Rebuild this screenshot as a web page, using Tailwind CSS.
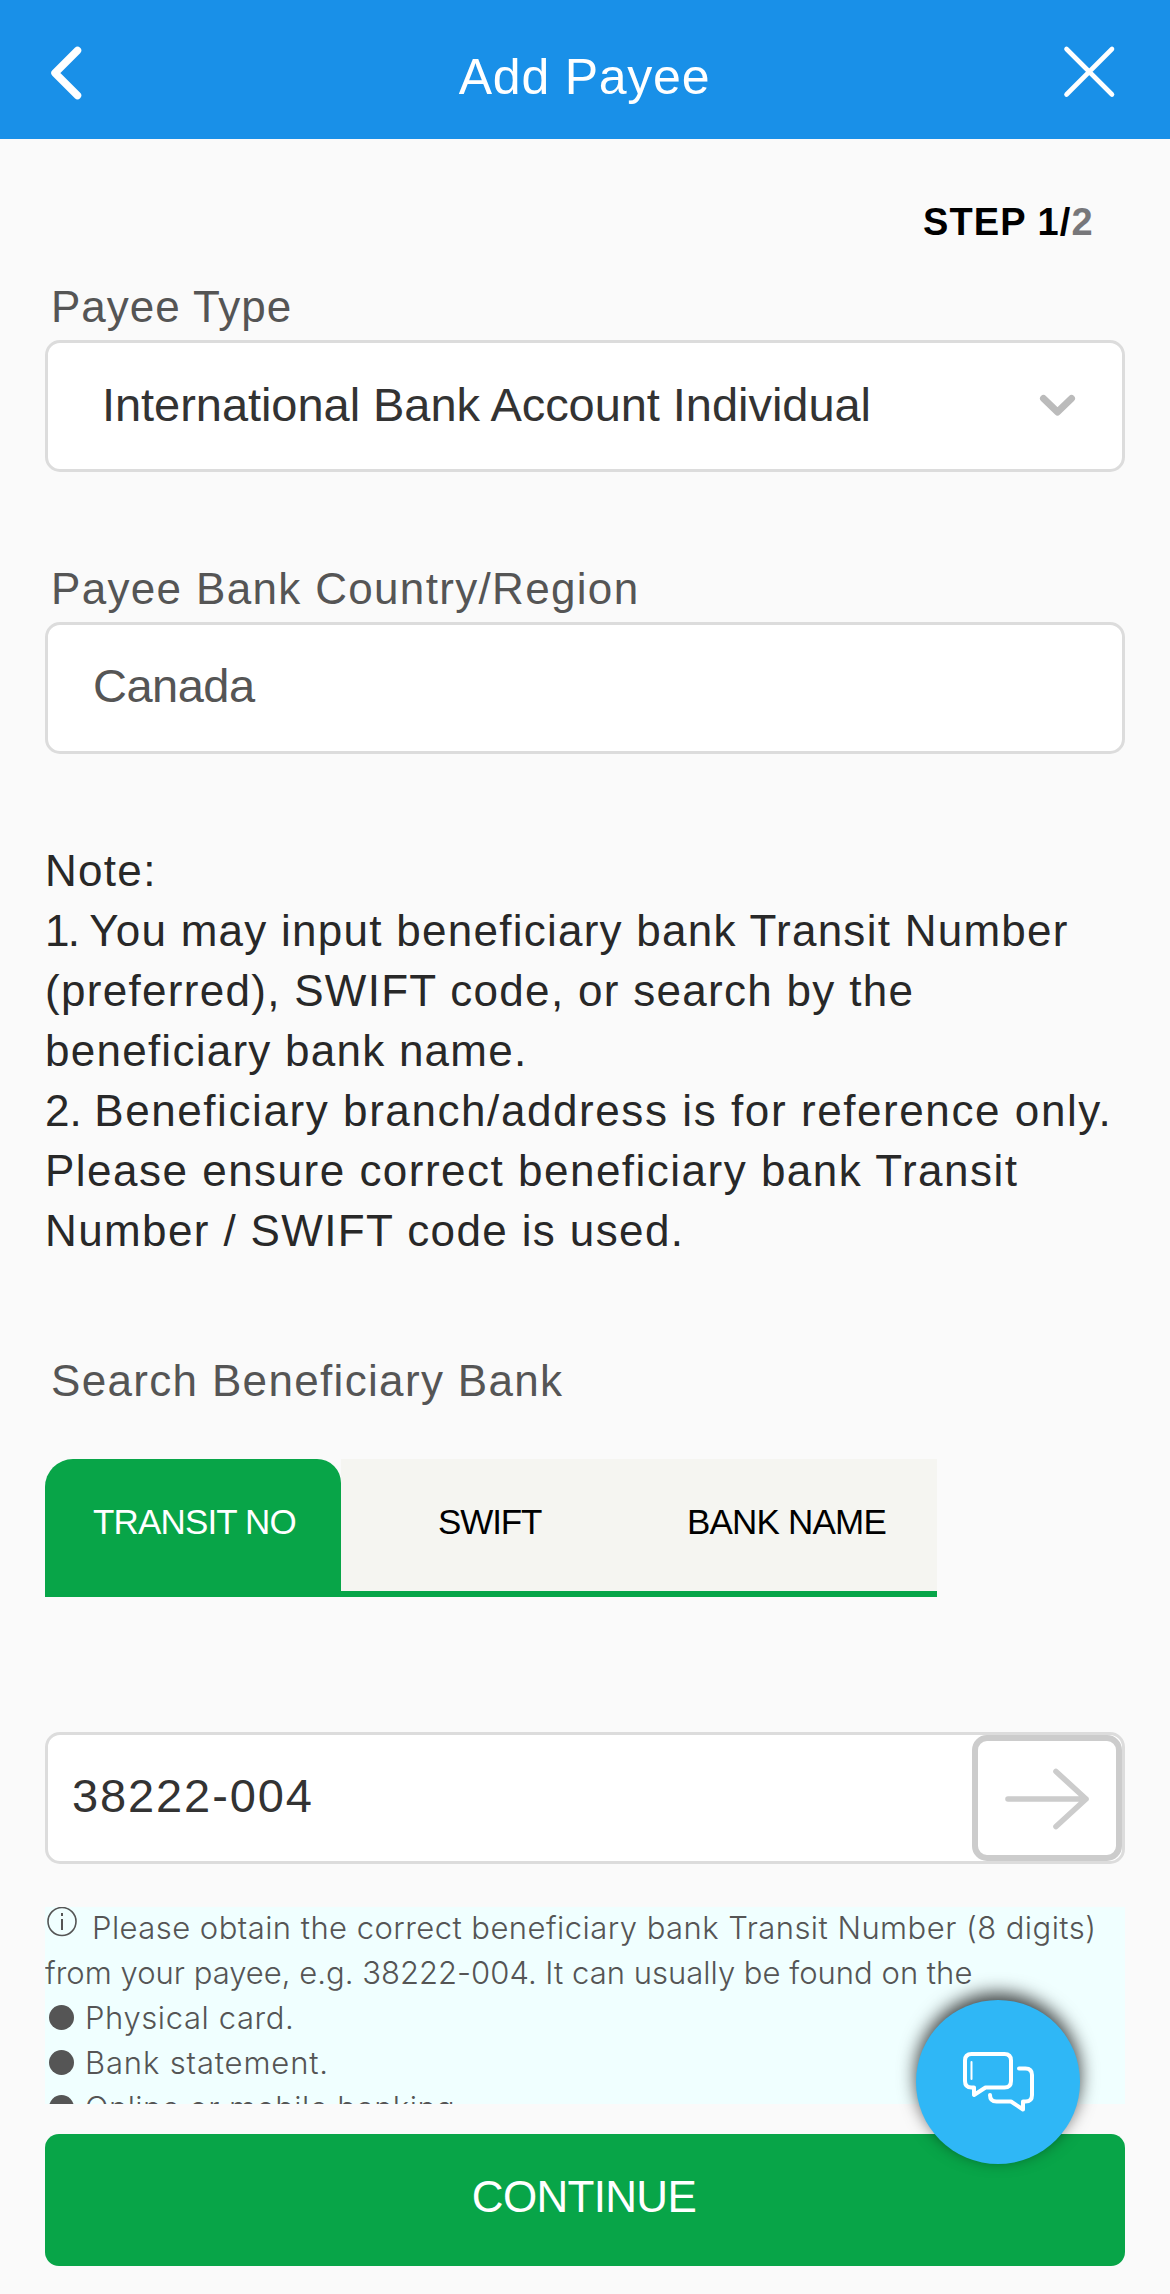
<!DOCTYPE html>
<html lang="en">
<head>
  <meta charset="UTF-8">
  <meta name="viewport" content="width=device-width, initial-scale=1.0">
  <title>Add Payee</title>
  <script src="https://cdn.jsdelivr.net/npm/@tailwindcss/browser@4"></script>
</head>
<body class="bg-[#fafafa] font-['Liberation_Sans',Arial,sans-serif] h-[2294px] overflow-hidden">

  <header class="bg-[#1990e8] h-[139px] flex items-center justify-between pl-[46px] pr-[52px]">
    <button type="button" aria-label="Back" class="mt-[7px] w-10">
      <svg class="w-10 h-[60px]" viewBox="0 0 40 60" fill="none" stroke="#fff" stroke-width="7.5" stroke-linecap="round" stroke-linejoin="round">
        <path d="M31.5 7.5 L9 30 L31.5 52.5"/>
      </svg>
    </button>
    <h1 class="text-white text-[50px] leading-[60px] tracking-[0.77px] pt-[15px] pl-[21px]">Add Payee</h1>
    <button type="button" aria-label="Close" class="mt-[4px]">
      <svg class="w-14 h-14" viewBox="0 0 56 56" fill="none" stroke="#fff" stroke-width="4.6" stroke-linecap="round">
        <path d="M4.5 5 L50 50.5 M50 5 L4.5 50.5"/>
      </svg>
    </button>
  </header>

  <main class="px-[45px] pt-[61px]">
    <p class="h-[81px] pl-[878px] text-[38px] leading-[44px] font-bold tracking-[1.1px] whitespace-nowrap">STEP 1/<span class="text-[#77777a]">2</span></p>

    <div class="mb-[91px]">
      <label class="block text-[#555] text-[44px] leading-[52px] tracking-[0.96px] pl-[6px] mb-[7px]">Payee Type</label>
      <div class="h-[132px] bg-white border-3 border-[#dcdcdc] rounded-[15px] flex items-center justify-between pl-[54px] pr-[44px] pb-[2px]">
        <span class="text-[#333] text-[47px] leading-[56px] tracking-[-0.05px]">International Bank Account Individual</span>
        <svg class="w-10 h-7 mt-[2px]" viewBox="0 0 40 28" fill="none" stroke="#bbb" stroke-width="7" stroke-linecap="round" stroke-linejoin="round">
          <path d="M5.5 6.5 L19.5 20 L33.5 6.5"/>
        </svg>
      </div>
    </div>

    <div class="mb-[87px]">
      <label class="block text-[#555] text-[44px] leading-[52px] tracking-[1.33px] pl-[6px] mb-[7px]">Payee Bank Country/Region</label>
      <div class="h-[132px] bg-white border-3 border-[#dcdcdc] rounded-[15px] flex items-center pl-[45px] pb-1">
        <span class="text-[#555] text-[47px] leading-[56px] tracking-[-0.5px]">Canada</span>
      </div>
    </div>

    <div class="text-[#282828] text-[44px] leading-[60px] whitespace-nowrap mb-[94px]">
      <p class="tracking-[1.3px]">Note:</p>
      <p class="tracking-[1.26px]"><span class="tracking-[-1.6px]">1. </span>You may input beneficiary bank Transit Number</p>
      <p class="tracking-[1.3px]">(preferred), SWIFT code, or search by the</p>
      <p class="tracking-[1.25px]">beneficiary bank name.</p>
      <p class="tracking-[1.58px]"><span class="tracking-[0.1px]">2. </span>Beneficiary branch/address is for reference only.</p>
      <p class="tracking-[1.49px]">Please ensure correct beneficiary bank Transit</p>
      <p class="tracking-[1.38px]">Number / SWIFT code is used.</p>
    </div>

    <h2 class="text-[#555] text-[44px] leading-[52px] tracking-[1.33px] pl-[6px] mb-[52px]">Search Beneficiary Bank</h2>

    <!-- search tabs -->
    <div class="w-[892px] h-[138px] flex text-[35px] leading-10 border-b-6 border-[#06a548] mb-[135px]">
      <div class="w-[296px] bg-[#08a548] text-white rounded-tl-[28px] rounded-tr-[24px] flex items-center pl-[48px] pb-[7px] tracking-[-0.84px] whitespace-nowrap">TRANSIT NO</div>
      <div class="w-[298px] bg-[#f5f5f1] text-black flex items-center pl-[97px] pb-[7px] tracking-[-1.1px]">SWIFT</div>
      <div class="w-[298px] bg-[#f5f5f1] text-black flex items-center pl-[48px] pb-[7px] tracking-[-0.8px] whitespace-nowrap">BANK NAME</div>
    </div>

    <div class="h-[132px] bg-white border-3 border-[#dcdcdc] rounded-[15px] flex items-center justify-between pl-[24px]">
      <span class="text-[#333] text-[47px] leading-[56px] tracking-[1.89px] pb-1">38222-004</span>
      <button type="button" aria-label="Search" class="w-[150px] h-[126px] bg-white border-6 border-[#ccc] rounded-[15px] flex items-center justify-center">
        <svg class="w-[90px] h-[70px]" viewBox="0 0 90 70" fill="none" stroke="#ccc" stroke-width="5.6" stroke-linecap="round" stroke-linejoin="round">
          <path d="M6 36 H84 M54 8.500 L84 36 L54 63.500"/>
        </svg>
      </button>
    </div>

    <!-- hint box, cut off by the footer button -->
    <div class="h-[197px] mt-[43px] mb-[30px] bg-[#f0ffff] overflow-hidden text-[#555] font-[Inter,sans-serif] font-light text-[31px] leading-[45px] whitespace-nowrap">
      <div class="-mt-[2px]">
        <p class="flex tracking-[0.45px]">
          <svg class="w-[31px] h-[31px] mt-[1px] ml-[1px] mr-[15px]" viewBox="0 0 31 31" fill="none" stroke="#555" stroke-width="1.6">
            <circle cx="16" cy="15.5" r="14"/>
            <path d="M16 13 V24 M16 7 V10" stroke-width="2"/>
          </svg>Please obtain the correct beneficiary bank Transit Number (8 digits)</p>
        <p class="tracking-[0.01px]">from your payee, e.g. 38222-004. It can usually be found on the</p>
        <p class="flex items-center tracking-[0.6px]"><span class="w-[25px] h-[25px] rounded-full bg-[#555] ml-1 mr-[11px]"></span>Physical card.</p>
        <p class="flex items-center tracking-[0.85px]"><span class="w-[25px] h-[25px] rounded-full bg-[#555] ml-1 mr-[11px]"></span>Bank statement.</p>
        <p class="flex items-center tracking-[0.45px]"><span class="w-[25px] h-[25px] rounded-full bg-[#555] ml-1 mr-[11px]"></span>Online or mobile banking.</p>
      </div>
    </div>

    <button type="button" class="w-full h-[132px] bg-[#08a548] rounded-[14px] text-white text-[44px] leading-[52px] tracking-[-0.69px] pr-[2px] pb-[6px] block">CONTINUE</button>
  </main>

  <!-- floating chat button -->
  <button type="button" aria-label="Chat" class="absolute left-[916px] top-[2000px] w-[164px] h-[164px] rounded-full bg-[#2fb7f6] shadow-[0_-7px_18px_0_rgba(0,0,0,0.75)]">
    <svg class="w-full h-full" viewBox="0 0 164 164" fill="none" stroke="#fff" stroke-width="4" stroke-linecap="round" stroke-linejoin="round">
      <path d="M55.500 54 H88.500 Q95 54 95 60.500 V81 Q95 87.500 88.500 87.500 H69.500 L58 95 V87.500 H55.500 Q49 87.500 49 81 V60.500 Q49 54 55.500 54 Z"/>
      <path d="M55.500 62 V79" stroke-width="2"/>
      <path d="M103 68.500 H109.500 Q116 68.500 116 75 V95 Q116 101.500 109.500 101.500 H107 V109.500 L95 101.500 H80.500 Q74 101.500 74 95"/>
    </svg>
  </button>

</body>
</html>
